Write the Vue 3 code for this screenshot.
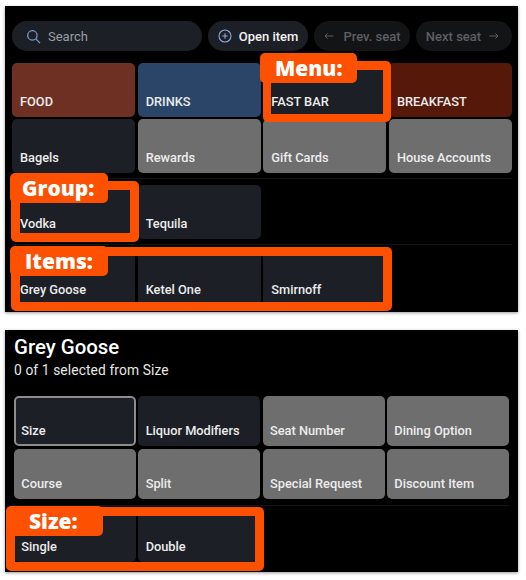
<script setup>
const menu = [
  ['FOOD', 'food'], ['DRINKS', 'drinks'], ['FAST BAR', 'dark'], ['BREAKFAST', 'brk'],
  ['Bagels', 'dark'], ['Rewards', 'grey'], ['Gift Cards', 'grey'], ['House Accounts', 'grey']
]
const groups = ['Vodka', 'Tequila']
const items = ['Grey Goose', 'Ketel One', 'Smirnoff']
const mods = [
  ['Size', 'dark sel'], ['Liquor Modifiers', 'dark'], ['Seat Number', 'grey'], ['Dining Option', 'grey'],
  ['Course', 'grey'], ['Split', 'grey'], ['Special Request', 'grey'], ['Discount Item', 'grey']
]
const sizes = ['Single', 'Double']
</script>

<template>
  <div class="page">
    <section class="panel top">
      <div class="toolbar">
        <div class="pill search">
          <svg width="15" height="15" viewBox="0 0 16 16" fill="none" stroke="#7f9fd0" stroke-width="1.3">
            <circle cx="6.8" cy="6.8" r="5" />
            <path d="M10.5 10.5L15 15" />
          </svg>
          <span>Search</span>
        </div>
        <div class="pill open">
          <svg width="14" height="14" viewBox="0 0 14 14" fill="none" stroke="#8fa8d8" stroke-width="1.1">
            <circle cx="7" cy="7" r="6" />
            <path d="M7 4.2v5.6M4.2 7h5.6" />
          </svg>
          <span>Open item</span>
        </div>
        <div class="pill seat prev">
          <svg width="10" height="8" viewBox="0 0 10 8" fill="none" stroke="#5d5f63" stroke-width="1">
            <path d="M9.5 4H1M3.6 1.4L1 4l2.6 2.6" />
          </svg>
          <span>Prev. seat</span>
        </div>
        <div class="pill seat next">
          <span>Next seat</span>
          <svg width="10" height="8" viewBox="0 0 10 8" fill="none" stroke="#5d5f63" stroke-width="1">
            <path d="M.5 4H9M6.4 1.4L9 4 6.4 6.6" />
          </svg>
        </div>
      </div>

      <div class="grid">
        <div v-for="m in menu" :key="m[0]" class="tile" :class="m[1]">{{ m[0] }}</div>
      </div>
      <div class="rule"></div>
      <div class="grid">
        <div v-for="g in groups" :key="g" class="tile dark">{{ g }}</div>
      </div>
      <div class="rule"></div>
      <div class="grid">
        <div v-for="i in items" :key="i" class="tile dark">{{ i }}</div>
      </div>

      <div class="mark m-menu"></div>
      <div class="tag t-menu">Menu:</div>
      <div class="mark m-group"></div>
      <div class="tag t-group">Group:</div>
      <div class="mark m-items"></div>
      <div class="tag t-items">Items:</div>
    </section>

    <section class="panel bottom">
      <h1>Grey Goose</h1>
      <p>0 of 1 selected from Size</p>
      <div class="grid mods">
        <div v-for="m in mods" :key="m[0]" class="tile" :class="m[1]">{{ m[0] }}</div>
      </div>
      <div class="rule mods-rule"></div>
      <div class="grid mods sizes">
        <div v-for="s in sizes" :key="s" class="tile dark">{{ s }}</div>
      </div>

      <div class="mark m-size"></div>
      <div class="tag t-size">Size:</div>
    </section>
  </div>
</template>

<style scoped>
.page {
  width: 526px;
  height: 580px;
  padding: 6px 8px 0 5px;
  box-sizing: border-box;
  display: flex;
  flex-direction: column;
  gap: 18px;
  background: #fff;
  font-family: Roboto, "Liberation Sans", sans-serif;
}
.panel {
  position: relative;
  background: #000;
  box-shadow: 0 1px 3px rgba(0, 0, 0, 0.4);
  box-sizing: border-box;
}
.top {
  height: 306px;
  padding: 15px 6px 0 7px;
}
.bottom {
  height: 242px;
  padding: 5px 9px 0 9px;
}
.toolbar {
  display: flex;
  gap: 6px;
  margin-bottom: 12px;
}
.pill {
  height: 30px;
  border-radius: 15px;
  background: #1c1f26;
  display: flex;
  align-items: center;
  justify-content: center;
  gap: 7px;
  font-size: 13px;
  font-weight: 500;
  color: #f2f2f2;
  box-sizing: border-box;
}
.search {
  width: 190px;
  justify-content: flex-start;
  padding-left: 14px;
  gap: 7px;
  color: #9a9da3;
  font-weight: 400;
}
.open {
  width: 100px;
}
.seat {
  width: 96px;
  background: #131416;
  color: #5d5f63;
}
.prev {
  gap: 9px;
  padding-left: 1px;
}
.next {
  gap: 8px;
  padding-right: 3px;
}
.grid {
  display: grid;
  grid-template-columns: repeat(4, 1fr);
  column-gap: 2.5px;
  row-gap: 2px;
}
.tile {
  height: 54px;
  border-radius: 5px;
  box-sizing: border-box;
  padding: 0 8px 8px;
  display: flex;
  align-items: flex-end;
  font-size: 12.8px;
  font-weight: 500;
  line-height: 15px;
  color: #ececec;
}
.food { background: #6f3024; }
.drinks { background: #2a4568; }
.dark { background: #1c1f26; }
.brk { background: #561808; }
.grey { background: #6e6e6e; }
.rule {
  height: 1px;
  background: #141414;
  margin: 5px 0 6px;
}
.mods {
  column-gap: 2.4px;
  row-gap: 3px;
}
.mods .tile {
  height: 50px;
  padding: 0 7.3px 8px;
}
.mods .sel {
  border: 2px solid #8c8c8c;
  padding: 0 5.3px 6px;
}
.mods-rule {
  margin: 6px 0 4px;
}
.sizes .tile,
.mods.sizes .tile {
  height: 52px;
}
h1 {
  margin: 0;
  font-size: 20.4px;
  line-height: 24px;
  font-weight: 500;
  color: #fff;
}
p {
  margin: 3px 0 17px;
  font-size: 13.8px;
  line-height: 17px;
  color: #e6e6e6;
  letter-spacing: 0.1px;
}
.mark {
  position: absolute;
  box-sizing: border-box;
  border: 9px solid #fd5000;
  border-radius: 5px;
}
.tag {
  position: absolute;
  background: #fd5000;
  color: #fff;
  border-radius: 5px;
  font-family: "Open Sans", "Noto Sans", sans-serif;
  font-weight: 800;
  font-size: 21px;
  line-height: 30px;
  height: 30px;
  box-sizing: border-box;
}
.m-menu { left: 258px; top: 55px; width: 128px; height: 61px; border-width: 9px 8px 8px; }
.t-menu { left: 255px; top: 47px; width: 97px; padding-left: 15px; }
.m-group { left: 6px; top: 175px; width: 128px; height: 61px; }
.t-group { left: 5px; top: 167px; width: 98px; padding-left: 12px; }
.m-items { left: 6px; top: 241px; width: 381px; height: 64px; }
.t-items { left: 5px; top: 240px; width: 98px; padding-left: 15px; }
.m-size { left: 1px; top: 177px; width: 258px; height: 64px; }
.t-size { left: 1px; top: 176px; width: 97px; padding-left: 23px; }
</style>

<style>
html, body { margin: 0; background: #fff; }
</style>
